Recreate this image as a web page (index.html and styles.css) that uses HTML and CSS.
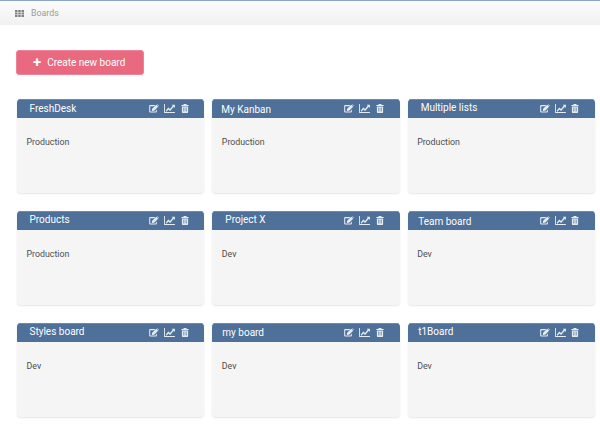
FILE: index.html
```html
<!DOCTYPE html>
<html lang="en">
<head>
<meta charset="utf-8">
<title>Boards</title>
<link rel="stylesheet" href="styles.css">
</head>
<body>
<svg class="defs" width="0" height="0" aria-hidden="true">
  <symbol id="i-edit" viewBox="0 0 12 10">
    <path d="M9 6.200v2.300c0 .7-.4 1.100-1 1.100H1.200c-.6 0-1-.4-1-1.100V2.200c0-.7.4-1.100 1-1.100h6L6 2.300H1.400v6.100h6.400V7.400z" fill="currentColor"/>
    <path d="M3.600 5.300 8.300.8l2.200 2.100-4.700 4.600-2.600.4zM8.900.3l.5-.3 2.200 2.100-.5.4z" fill="currentColor"/>
  </symbol>
  <symbol id="i-chart" viewBox="0 0 12 10">
    <path d="M0 0h1v9h11v1H0z" fill="currentColor"/>
    <path d="M1.800 7.600 4.600 4l2 1.600L9.600 2 8.400.9H12v3.500l-1.300-1.300-4 4.700-2-1.700-2 2.500z" fill="currentColor"/>
  </symbol>
  <symbol id="i-trash" viewBox="0 0 9 10">
    <path fill-rule="evenodd" d="M3 0h3l.4 1.200H8.600v1H.4v-1h2.200zM1 2.700h7v6.400c0 .5-.4.900-.9.900H1.900c-.5 0-.9-.4-.9-.9zM2.600 4v4.500h.6V4zM4.200 4v4.500h.6V4zM5.800 4v4.500h.6V4z" fill="currentColor"/>
  </symbol>
</svg>

<header class="topbar">
  <svg class="grid-icon" viewBox="0 0 9 7" aria-hidden="true">
    <path d="M0 0h2.500v2H0zM3.250 0h2.500v2h-2.500zM6.500 0H9v2H6.500zM0 2.500h2.500v2H0zM3.250 2.500h2.500v2h-2.500zM6.500 2.500H9v2H6.500zM0 5h2.500v2H0zM3.250 5h2.500v2h-2.500zM6.500 5H9v2H6.500z" fill="currentColor"/>
  </svg>
  <span class="crumb">Boards</span>
</header>

<main class="content">
  <button class="create" type="button"><span class="plus">+</span>Create new board</button>

  <section class="boards">
    <article class="card">
      <div class="card-head"><h2 class="title t-fresh">FreshDesk</h2><div class="actions">
        <svg class="ic ic-e"><use href="#i-edit"/></svg><svg class="ic ic-c"><use href="#i-chart"/></svg><svg class="ic ic-t"><use href="#i-trash"/></svg></div></div>
      <p class="env">Production</p>
    </article>
    <article class="card">
      <div class="card-head"><h2 class="title t-kanban">My Kanban</h2><div class="actions">
        <svg class="ic ic-e"><use href="#i-edit"/></svg><svg class="ic ic-c"><use href="#i-chart"/></svg><svg class="ic ic-t"><use href="#i-trash"/></svg></div></div>
      <p class="env">Production</p>
    </article>
    <article class="card">
      <div class="card-head"><h2 class="title t-13-up">Multiple lists</h2><div class="actions">
        <svg class="ic ic-e"><use href="#i-edit"/></svg><svg class="ic ic-c"><use href="#i-chart"/></svg><svg class="ic ic-t"><use href="#i-trash"/></svg></div></div>
      <p class="env">Production</p>
    </article>
    <article class="card">
      <div class="card-head"><h2 class="title t-12-up">Products</h2><div class="actions">
        <svg class="ic ic-e"><use href="#i-edit"/></svg><svg class="ic ic-c"><use href="#i-chart"/></svg><svg class="ic ic-t"><use href="#i-trash"/></svg></div></div>
      <p class="env">Production</p>
    </article>
    <article class="card">
      <div class="card-head"><h2 class="title t-13-up">Project X</h2><div class="actions">
        <svg class="ic ic-e"><use href="#i-edit"/></svg><svg class="ic ic-c"><use href="#i-chart"/></svg><svg class="ic ic-t"><use href="#i-trash"/></svg></div></div>
      <p class="env">Dev</p>
    </article>
    <article class="card">
      <div class="card-head"><h2 class="title t-11">Team board</h2><div class="actions">
        <svg class="ic ic-e"><use href="#i-edit"/></svg><svg class="ic ic-c"><use href="#i-chart"/></svg><svg class="ic ic-t"><use href="#i-trash"/></svg></div></div>
      <p class="env">Dev</p>
    </article>
    <article class="card">
      <div class="card-head"><h2 class="title t-12-up">Styles board</h2><div class="actions">
        <svg class="ic ic-e"><use href="#i-edit"/></svg><svg class="ic ic-c"><use href="#i-chart"/></svg><svg class="ic ic-t"><use href="#i-trash"/></svg></div></div>
      <p class="env">Dev</p>
    </article>
    <article class="card">
      <div class="card-head"><h2 class="title t-10">my board</h2><div class="actions">
        <svg class="ic ic-e"><use href="#i-edit"/></svg><svg class="ic ic-c"><use href="#i-chart"/></svg><svg class="ic ic-t"><use href="#i-trash"/></svg></div></div>
      <p class="env">Dev</p>
    </article>
    <article class="card">
      <div class="card-head"><h2 class="title t-11-up">t1Board</h2><div class="actions">
        <svg class="ic ic-e"><use href="#i-edit"/></svg><svg class="ic ic-c"><use href="#i-chart"/></svg><svg class="ic ic-t"><use href="#i-trash"/></svg></div></div>
      <p class="env">Dev</p>
    </article>
  </section>
</main>
</body>
</html>
```

FILE: styles.css
```css
* { box-sizing: border-box; }
html, body { margin: 0; padding: 0; }
body {
  width: 600px;
  height: 426px;
  overflow: hidden;
  background: #fff;
  font-family: Roboto, "Liberation Sans", sans-serif;
}
.defs { display: block; height: 0; }

.topbar {
  height: 25px;
  display: flex;
  align-items: center;
  padding-left: 15px;
  border-top: 1px solid #8ba3c4;
  background: linear-gradient(#fbfbfb, #f1f1f1);
}
.grid-icon { width: 9px; height: 7px; color: #808080; margin-right: 7px; }
.crumb { font-size: 8.800px; color: #9a9a9a; }

.content { padding: 25px 5px 0 17px; }

.create {
  display: flex;
  align-items: center;
  width: 128px;
  height: 25px;
  margin-left: -1px;
  padding: 0 0 0 16px;
  border: 1px solid #ee8296;
  border-radius: 3px;
  background: #e96a80;
  color: #fff;
  font: 400 10px Roboto, "Liberation Sans", sans-serif;
}
.plus { font-size: 15px; font-weight: 700; line-height: 1; margin-right: 6px; }

.boards {
  display: grid;
  grid-template-columns: repeat(3, 1fr);
  column-gap: 8px;
  row-gap: 18px;
  margin-top: 24px;
}
.card {
  height: 94px;
  border-radius: 4px;
  background: #f5f5f5;
  box-shadow: 0 1px 2px rgba(0, 0, 0, .1);
  overflow: hidden;
}
.card-head {
  position: relative;
  height: 19px;
  background: #4e7099;
  border-top: 1px solid #6d89ad;
  color: #fff;
}
.title {
  position: absolute;
  top: 0;
  margin: 0;
  font-size: 10px;
  font-weight: 400;
  line-height: 16px;
  white-space: nowrap;
}
.t-fresh { left: 12.500px; top: 0.500px; }
.t-12-up { left: 12.500px; top: 0; }
.t-kanban { left: 9px; top: 2px; }
.t-13-up { left: 13px; top: 0; }
.t-11 { left: 10.500px; top: 2px; }
.t-10 { left: 10px; top: 1px; }
.t-11-up { left: 10.500px; top: 0; }

.actions {
  position: absolute;
  top: 3.500px;
  left: 132px;
  display: flex;
  align-items: center;
  color: #e6ecf2;
}
.ic { display: block; height: 9px; }
.ic-e { width: 10.500px; margin-right: 4.500px; }
.ic-c { width: 11px; margin-right: 5.500px; }
.ic-t { width: 8px; }

.env {
  margin: 18px 0 0 9.500px;
  font-size: 8.800px;
  line-height: 12px;
  color: #4d4d4d;
}
```
